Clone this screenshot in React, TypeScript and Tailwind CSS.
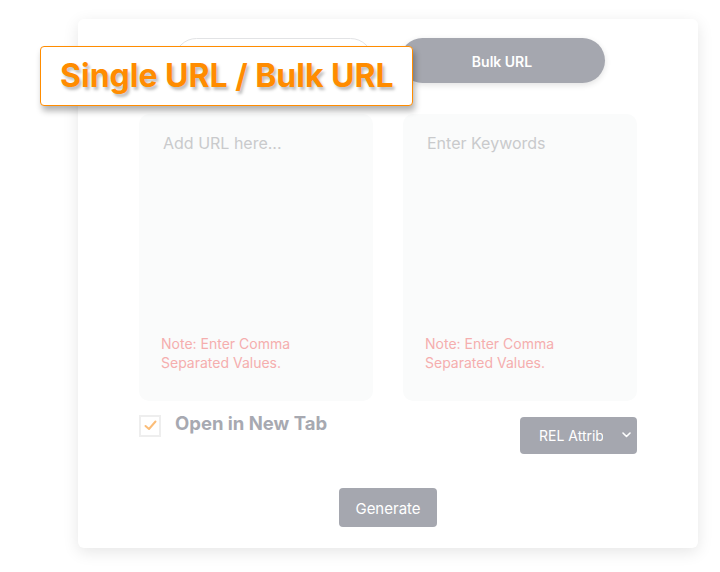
import React, { useState } from "react";

const gray = "bg-[#a5a7af]";

const UrlBox: React.FC<{ placeholder: string }> = ({ placeholder }) => (
  <div className="relative h-[287px] w-[234px] rounded-[10px] bg-[#fafbfb]">
    <textarea
      placeholder={placeholder}
      className="h-full w-full resize-none bg-transparent px-6 pt-[17px] text-[16px] text-gray-700 outline-none placeholder:text-[#c9cacc]"
    />
    <p className="pointer-events-none absolute bottom-[29px] left-[22px] text-[14px] leading-[19px] text-[#f5aeae]">
      Note: Enter Comma
      <br />
      Separated Values.
    </p>
  </div>
);

export default function App() {
  const [mode, setMode] = useState<"single" | "bulk">("bulk");
  const [newTab, setNewTab] = useState(true);

  return (
    <div className="relative h-[572px] w-[720px] bg-white font-['Inter',sans-serif]">
      <div className="ml-[78px] pt-[19px]">
        <div className="h-[529px] w-[620px] rounded-[6px] bg-white pt-[19px] shadow-[0_4px_16px_rgba(0,0,0,0.1)]">
          {/* mode switch */}
          <div className="flex justify-center gap-[27px] pl-[2px]">
            <button
              onClick={() => setMode("single")}
              className={`h-[45px] w-[199px] rounded-full border text-[14px] font-semibold ${
                mode === "single"
                  ? `${gray} border-transparent text-white`
                  : "border-[#e2e3e5] bg-white text-[#ececed]"
              }`}
            >
              Single URL
            </button>
            <button
              onClick={() => setMode("bulk")}
              className={`h-[45px] w-[205px] rounded-full pt-[1px] text-[14px] font-semibold shadow-[0_2px_6px_rgba(0,0,0,0.12)] ${
                mode === "bulk" ? `${gray} text-white` : "border border-[#e2e3e5] bg-white text-[#ececed]"
              }`}
            >
              Bulk URL
            </button>
          </div>

          {/* inputs */}
          <div className="mx-auto mt-[31px] w-[498px]">
            <div className="flex justify-between">
              <UrlBox placeholder="Add URL here..." />
              <UrlBox placeholder="Enter Keywords" />
            </div>

            <div className="mt-[13px] flex items-start justify-between">
              <label className="flex cursor-pointer items-center gap-[14px]">
                <span
                  onClick={() => setNewTab(!newTab)}
                  className="flex h-[22px] w-[22px] items-center justify-center border-2 border-[#eeeeee] bg-white"
                >
                  {newTab && (
                    <svg width="13" height="11" viewBox="0 0 13 11" fill="none">
                      <path d="M1.5 6 L5 9 L11.5 1.5" stroke="#fbbd78" strokeWidth="2" strokeLinecap="round" strokeLinejoin="round" />
                    </svg>
                  )}
                </span>
                <span className="-mt-[4px] text-[18.5px] font-bold text-[#a7a9b1]">Open in New Tab</span>
              </label>

              <div className={`relative mt-[3px] flex h-[37px] w-[117px] items-center rounded-[4px] ${gray} text-white`}>
                <span className="ml-[19px] w-[64px] overflow-hidden whitespace-nowrap text-[14px]">REL Attribute</span>
                <svg className="absolute right-[6px] top-[15px]" width="9" height="6" viewBox="0 0 9 6" fill="none">
                  <path d="M1 1 L4.5 4.5 L8 1" stroke="white" strokeWidth="1.6" strokeLinecap="round" strokeLinejoin="round" />
                </svg>
              </div>
            </div>

            <div className="mt-[34px] flex justify-center">
              <button className={`h-[39px] w-[98px] rounded-[4px] ${gray} pt-[3px] text-[15px] text-white`}>Generate</button>
            </div>
          </div>
        </div>
      </div>

      {/* callout */}
      <div className="absolute left-[40px] top-[46px] flex h-[60px] w-[373px] items-center rounded-[4px] border border-[#ff8c00] bg-white pl-[19px] shadow-[2px_5px_6px_rgba(0,0,0,0.3)]">
        <span className="font-['Inter',sans-serif] text-[32px] font-bold text-[#ff8c00] [text-shadow:2px_3px_3px_rgba(0,0,0,0.25)]">
          Single URL / Bulk URL
        </span>
      </div>
    </div>
  );
}
